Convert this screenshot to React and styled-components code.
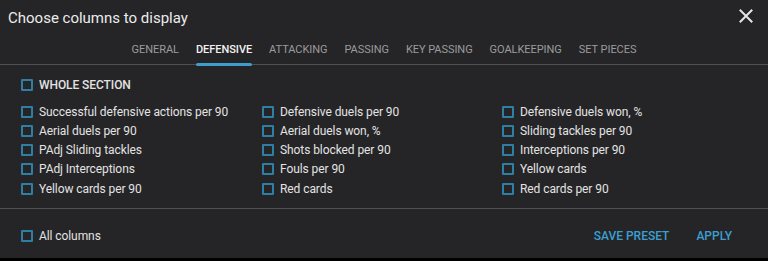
import React, { useState } from "react";
import styled, { createGlobalStyle } from "styled-components";

const GlobalStyle = createGlobalStyle`
  html, body {
    margin: 0;
    padding: 0;
    background: #000;
  }
  * {
    box-sizing: border-box;
  }
`;

const TABS = [
  "General",
  "Defensive",
  "Attacking",
  "Passing",
  "Key passing",
  "Goalkeeping",
  "Set pieces",
];

const COLUMNS = [
  "Successful defensive actions per 90",
  "Defensive duels per 90",
  "Defensive duels won, %",
  "Aerial duels per 90",
  "Aerial duels won, %",
  "Sliding tackles per 90",
  "PAdj Sliding tackles",
  "Shots blocked per 90",
  "Interceptions per 90",
  "PAdj Interceptions",
  "Fouls per 90",
  "Yellow cards",
  "Yellow cards per 90",
  "Red cards",
  "Red cards per 90",
];

const Check = ({ label, bold }) => {
  const [on, setOn] = useState(false);
  return (
    <CheckRow onClick={() => setOn(!on)}>
      <Box $on={on} />
      <Label $bold={bold}>{label}</Label>
    </CheckRow>
  );
};

const App = () => {
  const [tab, setTab] = useState("Defensive");

  return (
    <>
      <GlobalStyle />
      <Dialog>
        <Header>
          <Title>Choose columns to display</Title>
          <Close aria-label="close">
            <svg width="14" height="14" viewBox="0 0 14 14">
              <path
                d="M1.5 1.5 L12.5 12.5 M12.5 1.5 L1.5 12.5"
                stroke="#e6e6e6"
                strokeWidth="2"
                strokeLinecap="square"
              />
            </svg>
          </Close>
        </Header>
        <TabBar>
          {TABS.map((t) => (
            <Tab key={t} $active={t === tab} onClick={() => setTab(t)}>
              {t}
            </Tab>
          ))}
        </TabBar>
        <Body>
          <SectionRow>
            <Check label="Whole section" bold />
          </SectionRow>
          <Grid>
            {COLUMNS.map((c) => (
              <Check key={c} label={c} />
            ))}
          </Grid>
        </Body>
        <Footer>
          <Check label="All columns" />
          <Actions>
            <Action>Save preset</Action>
            <Action>Apply</Action>
          </Actions>
        </Footer>
      </Dialog>
    </>
  );
};

const Dialog = styled.div`
  width: 768px;
  height: 258px;
  background: #252527;
  font-family: Roboto, "Liberation Sans", sans-serif;
  color: #e2e2e2;
  display: flex;
  flex-direction: column;
`;

const Header = styled.div`
  height: 37px;
  display: flex;
  align-items: center;
  justify-content: space-between;
  padding: 0 15px 2px 8px;
`;

const Title = styled.h2`
  margin: 0;
  font-size: 15px;
  font-weight: 400;
  color: #ececec;
`;

const Close = styled.button`
  background: transparent;
  border: none;
  padding: 0;
  margin-bottom: 4px;
  display: flex;
  cursor: pointer;
`;

const TabBar = styled.div`
  height: 28px;
  display: flex;
  justify-content: center;
  gap: 17px;
  border-bottom: 1px solid #505052;
`;

const Tab = styled.div`
  position: relative;
  display: flex;
  align-items: center;
  padding-bottom: 3px;
  font-size: 11px;
  letter-spacing: -0.05px;
  text-transform: uppercase;
  color: ${(p) => (p.$active ? "#f2f2f2" : "#9b9b9d")};
  font-weight: ${(p) => (p.$active ? 500 : 400)};
  cursor: pointer;

  &::after {
    content: "";
    display: ${(p) => (p.$active ? "block" : "none")};
    position: absolute;
    left: 0;
    right: 0;
    bottom: -2px;
    height: 3px;
    border-radius: 2px;
    background: #3c9ecd;
  }
`;

const Body = styled.div`
  height: 144px;
  padding: 10px 0 0 21px;
  border-bottom: 1px solid #505052;
`;

const SectionRow = styled.div`
  height: 27px;
`;

const Grid = styled.div`
  display: grid;
  grid-template-columns: 241px 240px 1fr;
  grid-auto-rows: 19.3px;
`;

const CheckRow = styled.label`
  display: flex;
  align-items: center;
  gap: 6px;
  cursor: pointer;
  height: 19px;
`;

const Box = styled.span`
  width: 12px;
  height: 12px;
  flex: none;
  border: 2px solid #2f7ea4;
  border-radius: 1px;
  background: ${(p) => (p.$on ? "#2f7ea4" : "transparent")};
`;

const Label = styled.span`
  font-size: 12px;
  letter-spacing: -0.08px;
  color: #e3e3e3;
  font-weight: ${(p) => (p.$bold ? 500 : 400)};
  text-transform: ${(p) => (p.$bold ? "uppercase" : "none")};
`;

const Footer = styled.div`
  flex: 1;
  display: flex;
  align-items: center;
  justify-content: space-between;
  padding: 4px 36px 0 21px;
`;

const Actions = styled.div`
  display: flex;
  gap: 27px;
`;

const Action = styled.button`
  background: transparent;
  border: none;
  padding: 0;
  font-family: inherit;
  font-size: 12px;
  font-weight: 500;
  text-transform: uppercase;
  color: #3b9fd0;
  cursor: pointer;
`;

export default App;
